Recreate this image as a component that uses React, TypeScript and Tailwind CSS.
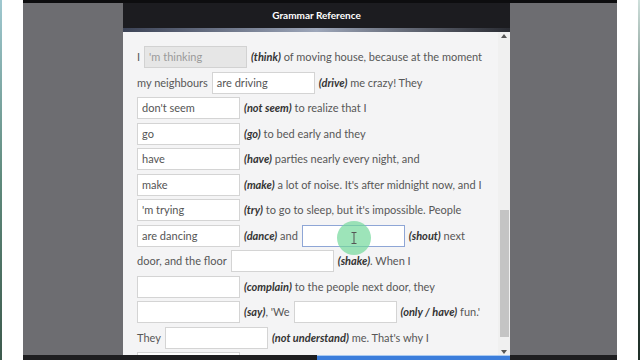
import React from "react";

const Field: React.FC<{ value?: string; disabled?: boolean; focused?: boolean }> = ({
	value = "",
	disabled,
	focused,
}) => {
	let cls = "h-[22px] w-[103px] shrink-0 px-[4px] flex items-center border text-[11px] ";
	if (disabled) cls += "bg-[#e6e6e6] border-[#d2d2d2] text-[#9a9a9a]";
	else if (focused) cls += "bg-white border-[#8ea6d6] text-[#555]";
	else cls += "bg-white border-[#d4d4d4] text-[#555]";
	return <div className={cls}>{value}</div>;
};

const V: React.FC<{ children: React.ReactNode }> = ({ children }) => (
	<span className="font-bold italic text-[#333]">{children}</span>
);

const Row: React.FC<{ children: React.ReactNode }> = ({ children }) => (
	<div className="h-[25.5px] flex items-center gap-[4px] whitespace-nowrap">{children}</div>
);

const App: React.FC = () => {
	return (
		<div
			className="w-[640px] h-[360px] flex bg-white overflow-hidden"
			style={{ fontFamily: "Lato, 'Open Sans', sans-serif" }}
		>
			<div className="w-[2px] bg-gradient-to-b from-[#9fc8d0] via-[#5f8a7c] to-[#3d5a4d]" />
			<div className="w-[21px] bg-white" />
			<div className="w-[594px] flex flex-col">
				<div className="h-[3px] bg-[#0d0d0f]" />
				<div className="flex-1 flex min-h-0">
					<div className="w-[100px] bg-[#6d6d71]" />
					<div className="w-[387px] flex flex-col min-h-0">
						<div className="h-[25px] bg-[#1c1c20] flex items-center justify-center text-white text-[10px] font-bold">
							Grammar Reference
						</div>
						<div className="h-[4px] bg-gradient-to-r from-[#3c4356] via-[#9ea7ba] to-[#2a2c33]" />
						<div className="flex-1 flex min-h-0 bg-[#f4f4f5]">
							<div className="relative flex-1 pl-[14px] pt-[12.5px] overflow-hidden text-[11px] text-[#575757]">
								<Row>
									<span>I</span>
									<Field value="'m thinking" disabled />
									<span>
										<V>(think)</V> of moving house, because at the moment
									</span>
								</Row>
								<Row>
									<span>my neighbours</span>
									<Field value="are driving" />
									<span>
										<V>(drive)</V> me crazy! They
									</span>
								</Row>
								<Row>
									<Field value="don't seem" />
									<span>
										<V>(not seem)</V> to realize that I
									</span>
								</Row>
								<Row>
									<Field value="go" />
									<span>
										<V>(go)</V> to bed early and they
									</span>
								</Row>
								<Row>
									<Field value="have" />
									<span>
										<V>(have)</V> parties nearly every night, and
									</span>
								</Row>
								<Row>
									<Field value="make" />
									<span>
										<V>(make)</V> a lot of noise. It's after midnight now, and I
									</span>
								</Row>
								<Row>
									<Field value="'m trying" />
									<span>
										<V>(try)</V> to go to sleep, but it's impossible. People
									</span>
								</Row>
								<Row>
									<Field value="are dancing" />
									<span>
										<V>(dance)</V> and
									</span>
									<Field focused />
									<span>
										<V>(shout)</V> next
									</span>
								</Row>
								<Row>
									<span>door, and the floor</span>
									<Field />
									<span>
										<V>(shake)</V>. When I
									</span>
								</Row>
								<Row>
									<Field />
									<span>
										<V>(complain)</V> to the people next door, they
									</span>
								</Row>
								<Row>
									<Field />
									<span>
										<V>(say)</V>, 'We
									</span>
									<Field />
									<span>
										<V>(only / have)</V> fun.'
									</span>
								</Row>
								<Row>
									<span>They</span>
									<Field />
									<span>
										<V>(not understand)</V> me. That's why I
									</span>
								</Row>
								<Row>
									<Field />
								</Row>
								{/* click highlight + text cursor */}
								<div className="absolute left-[214px] top-[189px] w-[34px] h-[34px] rounded-full bg-[#74d99b] opacity-70" />
								<svg
									className="absolute left-[228px] top-[200px]"
									width="6"
									height="12"
									viewBox="0 0 6 12"
								>
									<path d="M0.5 0.5h5M0.5 11.5h5M3 0.5v11" stroke="#555" strokeWidth="1" fill="none" />
								</svg>
							</div>
							<div className="w-[12px] bg-[#f0f0f0] flex flex-col items-center">
								<svg className="mt-[2px]" width="6" height="4" viewBox="0 0 6 4">
									<path d="M0 4L3 0L6 4Z" fill="#555" />
								</svg>
								<div className="mt-[172px] w-[9px] h-[127px] bg-[#c4c4c4]" />
								<svg className="mt-[13px]" width="6" height="4" viewBox="0 0 6 4">
									<path d="M0 0L6 0L3 4Z" fill="#555" />
								</svg>
							</div>
						</div>
					</div>
					<div className="flex-1 bg-[#6d6d71]" />
				</div>
				<div className="h-[5px] bg-[#1e1e20] flex">
					<div className="ml-[294px] w-[193px] bg-[#3b7ddb] border-t border-[#a9c9f0]" />
				</div>
			</div>
			<div className="w-[21px] bg-white" />
			<div className="w-[2px] bg-gradient-to-b from-[#cfe0dc] via-[#2f4a40] to-[#1f2f28]" />
		</div>
	);
};

export default App;
